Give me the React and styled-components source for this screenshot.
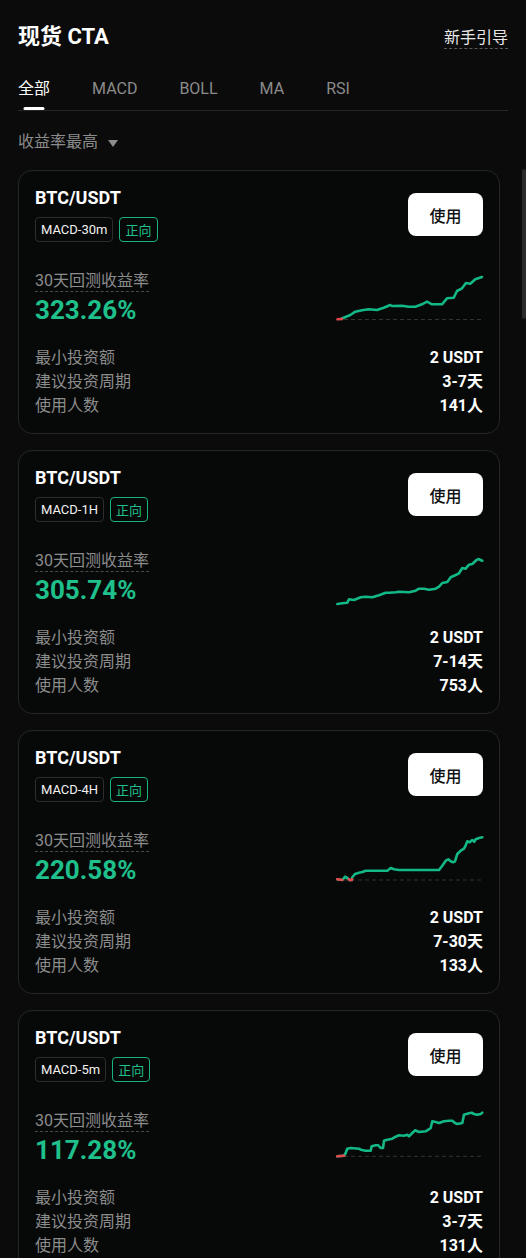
import React from "react";
import styled, { createGlobalStyle } from "styled-components";

const GlobalStyle = createGlobalStyle`
  html, body {
    margin: 0;
    padding: 0;
    background: #0b0b0b;
    overflow: hidden;
  }
  body {
    font-family: Roboto, "Noto Sans CJK SC", sans-serif;
    color: #fff;
  }
  * { box-sizing: border-box; }
`;

const Page = styled.div`
  width: 526px;
  min-height: 1258px;
  background: #0b0b0b;
  padding-top: 24px;
`;

const Header = styled.div`
  display: flex;
  align-items: center;
  justify-content: space-between;
  padding: 0 18px;
  height: 26px;
`;

const Title = styled.h1`
  margin: 0;
  font-size: 22px;
  line-height: 26px;
  font-weight: 700;
  color: #fff;
`;

const GuideLink = styled.span`
  font-size: 16px;
  line-height: 20px;
  color: #e8e8e8;
  border-bottom: 1px dashed #5a5a5a;
  margin-top: 2px;
`;

const TabBar = styled.div`
  display: flex;
  gap: 42px;
  margin: 28px 18px 0;
  border-bottom: 1px solid #262626;
`;

const Tab = styled.div`
  position: relative;
  font-size: 16px;
  line-height: 22px;
  padding-bottom: 10px;
  color: ${(p) => (p.$active ? "#fff" : "#8c8c8c")};
  &::after {
    content: "";
    display: ${(p) => (p.$active ? "block" : "none")};
    position: absolute;
    left: 50%;
    bottom: 0;
    transform: translateX(-50%);
    width: 21px;
    height: 3px;
    border-radius: 2px;
    background: #fff;
  }
`;

const SortRow = styled.div`
  display: flex;
  align-items: center;
  gap: 10px;
  margin: 21px 18px 0;
  font-size: 16px;
  line-height: 20px;
  color: #8c8c8c;
`;

const Caret = styled.span`
  width: 0;
  height: 0;
  border-left: 5px solid transparent;
  border-right: 5px solid transparent;
  border-top: 7px solid #8c8c8c;
  margin-top: 2px;
`;

const ListArea = styled.div`
  position: relative;
  margin-top: 18px;
  padding: 0 26px 0 18px;
  display: flex;
  flex-direction: column;
  gap: 16px;
`;

const ScrollThumb = styled.div`
  position: absolute;
  right: 0;
  top: -1px;
  width: 4px;
  height: 150px;
  border-radius: 2px;
  background: #2b2b2b;
`;

const Card = styled.div`
  background: #070909;
  border: 1px solid #252727;
  border-radius: 14px;
  padding: 16px 16px 15px 16px;
`;

const CardTop = styled.div`
  display: flex;
  align-items: center;
  justify-content: space-between;
`;

const TopLeft = styled.div`
  display: flex;
  flex-direction: column;
  gap: 8px;
`;

const Pair = styled.div`
  font-size: 18px;
  line-height: 22px;
  font-weight: 700;
  color: #fff;
`;

const Tags = styled.div`
  display: flex;
  gap: 6px;
`;

const Tag = styled.span`
  height: 25px;
  display: inline-flex;
  align-items: center;
  padding: 0 5px;
  border-radius: 4px;
  font-size: 13px;
  font-weight: 400;
  border: 1px solid ${(p) => (p.$green ? "#19b283" : "#2c2e2e")};
  color: ${(p) => (p.$green ? "#1fc08b" : "#f2f2f2")};
`;

const UseButton = styled.button`
  width: 75px;
  height: 43px;
  border: none;
  border-radius: 8px;
  background: #fff;
  color: #111;
  font-family: inherit;
  font-size: 16px;
  font-weight: 500;
  cursor: pointer;
`;

const Middle = styled.div`
  display: flex;
  justify-content: space-between;
  align-items: flex-start;
  margin-top: 29px;
`;

const ReturnBlock = styled.div`
  display: flex;
  flex-direction: column;
  align-items: flex-start;
`;

const ReturnLabel = styled.span`
  font-size: 16px;
  line-height: 20px;
  color: #8c8c8c;
  border-bottom: 1px dashed #4a4a4a;
`;

const ReturnValue = styled.div`
  margin-top: 3px;
  font-size: 26px;
  line-height: 30px;
  font-weight: 700;
  color: #1fc08b;
`;

const ChartSvg = styled.svg`
  display: block;
  margin-top: 3px;
  overflow: visible;
`;

const Stats = styled.div`
  margin-top: 21px;
  display: flex;
  flex-direction: column;
`;

const StatRow = styled.div`
  display: flex;
  justify-content: space-between;
  font-size: 16px;
  line-height: 24px;
`;

const StatLabel = styled.span`
  color: #8c8c8c;
`;

const StatValue = styled.span`
  color: #fff;
  font-weight: 700;
`;

const toPts = (arr) => arr.map(([x, y]) => `${x},${y}`).join(" ");

function Sparkline({ green, reds = [], baseline }) {
  return (
    <ChartSvg width="146" height="48" viewBox="0 0 146 48">
      {baseline != null && (
        <line
          x1="0"
          x2="146"
          y1={baseline}
          y2={baseline}
          stroke="#333535"
          strokeWidth="1"
          strokeDasharray="4 3"
        />
      )}
      <polyline
        points={toPts(green)}
        fill="none"
        stroke="#13b887"
        strokeWidth="2.6"
        strokeLinejoin="round"
        strokeLinecap="round"
      />
      {reds.map((r, i) => (
        <polyline
          key={i}
          points={toPts(r)}
          fill="none"
          stroke="#e5484d"
          strokeWidth="2.6"
          strokeLinejoin="round"
          strokeLinecap="round"
        />
      ))}
    </ChartSvg>
  );
}

const cards = [
  {
    tag: "MACD-30m",
    ret: "323.26%",
    period: "3-7天",
    users: "141人",
    baseline: 45.5,
    reds: [[[0.5, 45.3], [5, 45]]],
    green: [
      [4, 45], [6.7, 43.7], [13.3, 41], [18.3, 37.7], [25, 36.3], [31.7, 35.3], [40, 36],
      [46.7, 33.7], [53.3, 31], [55, 32], [65, 31.7], [71.7, 32.7], [78.3, 32.7], [85, 30.3],
      [90, 27.7], [95, 30.3], [105, 30.3], [110, 24.3], [116.7, 23.7], [120, 17], [125, 14.3],
      [129, 9], [133.3, 9.7], [138.3, 5.3], [145, 3],
    ],
  },
  {
    tag: "MACD-1H",
    ret: "305.74%",
    period: "7-14天",
    users: "753人",
    baseline: null,
    reds: [],
    green: [
      [0.3, 50], [5.3, 49.3], [10.3, 48.7], [12, 45.3], [17, 46], [23.7, 43.3], [28.7, 42.7],
      [35.3, 43.3], [42, 41.3], [45.3, 40], [48.7, 38.7], [52, 38.7], [58.7, 38.3], [62, 37.7],
      [72, 38.3], [78.7, 36.7], [82, 34.7], [87, 34.7], [92, 35.7], [98.7, 34.7], [102, 32.7],
      [105.3, 29], [110.3, 28], [113.7, 23.3], [118.7, 21], [122, 19.3], [125.3, 14],
      [128.7, 14.7], [132, 10.7], [135.3, 10], [138.7, 6.7], [141.3, 5], [145.3, 6.7],
    ],
  },
  {
    tag: "MACD-4H",
    ret: "220.58%",
    period: "7-30天",
    users: "133人",
    baseline: 46,
    reds: [
      [[0.3, 45.3], [3.7, 45.8], [5.3, 46]],
      [[11.8, 45.2], [12.7, 46], [14.7, 46], [15, 45.2]],
    ],
    green: [
      [0.3, 45.3], [5.3, 46], [8, 42.7], [10.3, 44], [12.7, 46], [14.7, 46], [15.3, 43.3],
      [18, 40], [22, 38.7], [25.3, 38], [28.7, 36.7], [32, 36.7], [38.7, 36.7], [50.3, 36.7],
      [53.7, 34], [57, 35.3], [62, 36], [102, 36], [105.3, 31.7], [108.7, 26.7], [111.3, 25.3],
      [113.7, 27.3], [116, 28.3], [118, 27.3], [120.3, 20], [123.7, 16.7], [127, 14.7],
      [128.7, 11.3], [130.3, 7.3], [132.7, 8.3], [135.3, 6], [137.3, 7.7], [138.7, 5.3],
      [142, 4], [145.3, 3.3],
    ],
  },
  {
    tag: "MACD-5m",
    ret: "117.28%",
    period: "3-7天",
    users: "131人",
    baseline: 42.3,
    reds: [[[0.3, 42.3], [7, 41.7]]],
    green: [
      [0.3, 42.3], [7, 41.7], [8.7, 39], [10.3, 34.7], [13.7, 34], [22, 34.7], [23.7, 35.7],
      [28.7, 36.7], [33.7, 36.7], [34.7, 32.3], [38.7, 31.3], [41.3, 31.3], [43.7, 34],
      [46, 34], [47, 26.7], [50.3, 25.7], [55.3, 24.7], [58.7, 22.7], [62, 21.3], [67, 21.7],
      [70.3, 20.7], [72, 22.3], [75.3, 19], [78, 16.3], [82, 18], [88.7, 17.3], [91.3, 15.7],
      [93.7, 14], [95.3, 7.3], [98.7, 8], [102, 9], [107, 7.3], [112, 6.7], [115.3, 6.7],
      [118, 9], [120.3, 10], [125.3, 9], [127, 0.7], [132, -0.7], [134.7, -1.3], [137, 0],
      [140.3, 0.7], [143.7, 0], [145.3, -1.3],
    ],
  },
];

const tabs = ["全部", "MACD", "BOLL", "MA", "RSI"];

export default function App() {
  return (
    <>
      <GlobalStyle />
      <Page>
        <Header>
          <Title>现货 CTA</Title>
          <GuideLink>新手引导</GuideLink>
        </Header>
        <TabBar>
          {tabs.map((t, i) => (
            <Tab key={t} $active={i === 0}>
              {t}
            </Tab>
          ))}
        </TabBar>
        <SortRow>
          收益率最高
          <Caret />
        </SortRow>
        <ListArea>
          <ScrollThumb />
          {cards.map((c, i) => (
            <Card key={i}>
              <CardTop>
                <TopLeft>
                  <Pair>BTC/USDT</Pair>
                  <Tags>
                    <Tag>{c.tag}</Tag>
                    <Tag $green>正向</Tag>
                  </Tags>
                </TopLeft>
                <UseButton>使用</UseButton>
              </CardTop>
              <Middle>
                <ReturnBlock>
                  <ReturnLabel>30天回测收益率</ReturnLabel>
                  <ReturnValue>{c.ret}</ReturnValue>
                </ReturnBlock>
                <Sparkline green={c.green} reds={c.reds} baseline={c.baseline} />
              </Middle>
              <Stats>
                <StatRow>
                  <StatLabel>最小投资额</StatLabel>
                  <StatValue>2 USDT</StatValue>
                </StatRow>
                <StatRow>
                  <StatLabel>建议投资周期</StatLabel>
                  <StatValue>{c.period}</StatValue>
                </StatRow>
                <StatRow>
                  <StatLabel>使用人数</StatLabel>
                  <StatValue>{c.users}</StatValue>
                </StatRow>
              </Stats>
            </Card>
          ))}
        </ListArea>
      </Page>
    </>
  );
}
